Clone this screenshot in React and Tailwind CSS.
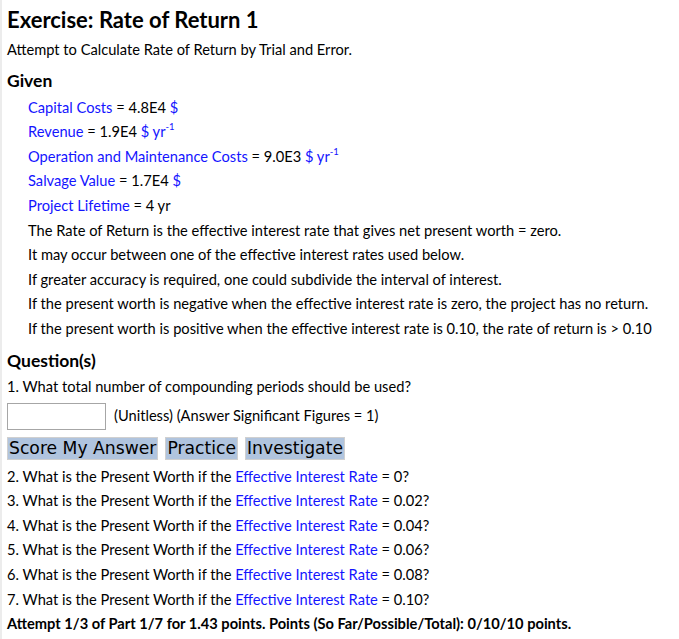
import React from 'react';

const blue = 'text-[#1414ff]';

const Given = ({ label, value, unit }) => (
  <div className="leading-[24.6px]">
    <span className={blue}>{label}</span> = {value}
    {unit && <span className={blue}> {unit}</span>}
  </div>
);

const Yr = () => (
  <>
    $ yr<sup className="text-[9.5px] top-[-0.75em]">-1</sup>
  </>
);

const notes = [
  'The Rate of Return is the effective interest rate that gives net present worth = zero.',
  'It may occur between one of the effective interest rates used below.',
  'If greater accuracy is required, one could subdivide the interval of interest.',
  'If the present worth is negative when the effective interest rate is zero, the project has no return.',
  'If the present worth is positive when the effective interest rate is 0.10, the rate of return is > 0.10',
];

const rates = ['0', '0.02', '0.04', '0.06', '0.08', '0.10'];

export default function App() {
  return (
    <div className="min-h-screen bg-white border-l-2 border-[#ececec] pl-[5px] text-black text-[14.67px] font-['Lato','Noto_Sans',sans-serif]">
      <h1 className="pt-[6px] text-[22px] font-bold leading-[28px]">Exercise: Rate of Return 1</h1>
      <div className="mt-[3.7px] leading-[24.6px]">Attempt to Calculate Rate of Return by Trial and Error.</div>

      <h2 className="mt-[6px] text-[17.5px] font-bold leading-[26px]">Given</h2>
      <div className="mt-[1.4px] pl-[21px]">
        <Given label="Capital Costs" value="4.8E4" unit="$" />
        <Given label="Revenue" value="1.9E4" unit={<Yr />} />
        <Given label="Operation and Maintenance Costs" value="9.0E3" unit={<Yr />} />
        <Given label="Salvage Value" value="1.7E4" unit="$" />
        <div className="leading-[24.6px]">
          <span className={blue}>Project Lifetime</span> = 4 yr
        </div>
        {notes.map((n) => (
          <div key={n} className="leading-[24.6px]">{n}</div>
        ))}
      </div>

      <h2 className="mt-[6.3px] text-[17.5px] font-bold leading-[26px]">Question(s)</h2>
      <div className="mt-[0.7px] leading-[24.6px]">1. What total number of compounding periods should be used?</div>
      <div className="mt-[3.7px] flex items-center gap-[8px]">
        <input type="text" className="w-[99px] h-[27px] border border-[#a6a6a6] bg-white outline-none" />
        <span>(Unitless) (Answer Significant Figures = 1)</span>
      </div>
      <div className="mt-[7px] flex gap-[7px] font-['DejaVu_Sans',sans-serif] text-[17.2px] leading-[21px]">
        <button className="bg-[#b0c4de] border border-[#d0d0d0] px-[1px] h-[23px]">Score My Answer</button>
        <button className="bg-[#b0c4de] border border-[#d0d0d0] px-[1px] h-[23px]">Practice</button>
        <button className="bg-[#b0c4de] border border-[#d0d0d0] px-[1px] h-[23px]">Investigate</button>
      </div>
      <div className="mt-[4.7px]">
        {rates.map((r, i) => (
          <div key={r} className="leading-[24.6px]">
            {i + 2}. What is the Present Worth if the <span className={blue}>Effective Interest Rate</span> = {r}?
          </div>
        ))}
        <div className="leading-[24.6px] font-bold">
          Attempt 1/3 of Part 1/7 for 1.43 points. Points (So Far/Possible/Total): 0/10/10 points.
        </div>
      </div>
    </div>
  );
}
